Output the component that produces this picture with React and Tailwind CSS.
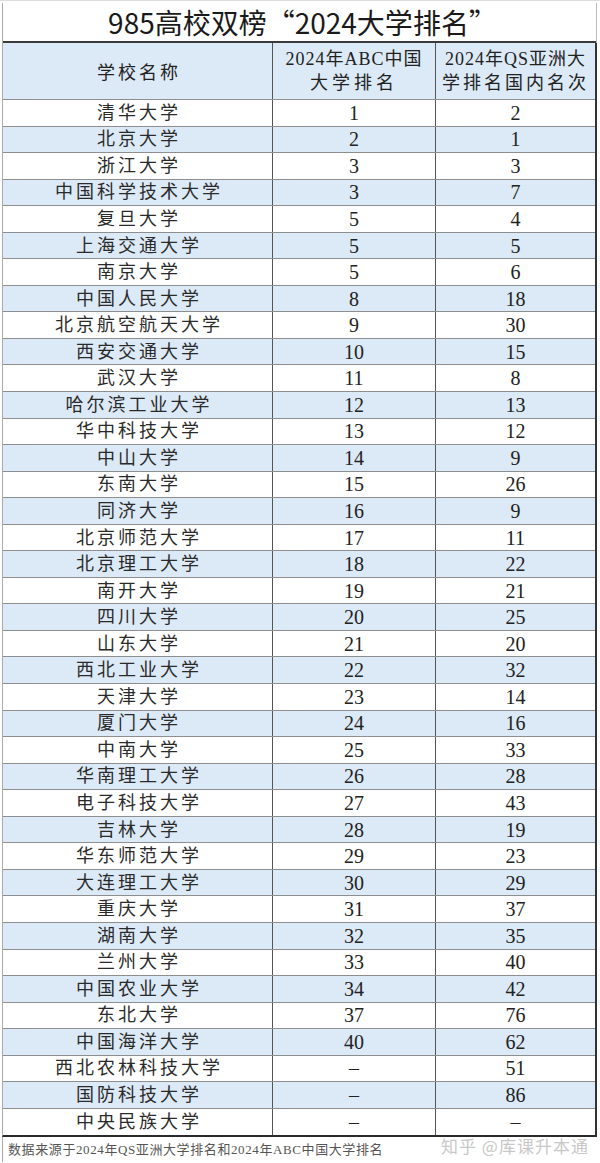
import React from 'react';

const rows = [
    ['清华大学', '1', '2'],
    ['北京大学', '2', '1'],
    ['浙江大学', '3', '3'],
    ['中国科学技术大学', '3', '7'],
    ['复旦大学', '5', '4'],
    ['上海交通大学', '5', '5'],
    ['南京大学', '5', '6'],
    ['中国人民大学', '8', '18'],
    ['北京航空航天大学', '9', '30'],
    ['西安交通大学', '10', '15'],
    ['武汉大学', '11', '8'],
    ['哈尔滨工业大学', '12', '13'],
    ['华中科技大学', '13', '12'],
    ['中山大学', '14', '9'],
    ['东南大学', '15', '26'],
    ['同济大学', '16', '9'],
    ['北京师范大学', '17', '11'],
    ['北京理工大学', '18', '22'],
    ['南开大学', '19', '21'],
    ['四川大学', '20', '25'],
    ['山东大学', '21', '20'],
    ['西北工业大学', '22', '32'],
    ['天津大学', '23', '14'],
    ['厦门大学', '24', '16'],
    ['中南大学', '25', '33'],
    ['华南理工大学', '26', '28'],
    ['电子科技大学', '27', '43'],
    ['吉林大学', '28', '19'],
    ['华东师范大学', '29', '23'],
    ['大连理工大学', '30', '29'],
    ['重庆大学', '31', '37'],
    ['湖南大学', '32', '35'],
    ['兰州大学', '33', '40'],
    ['中国农业大学', '34', '42'],
    ['东北大学', '37', '76'],
    ['中国海洋大学', '40', '62'],
    ['西北农林科技大学', '–', '51'],
    ['国防科技大学', '–', '86'],
    ['中央民族大学', '–', '–'],
];

const serif = "font-['Liberation_Serif','Noto_Sans_CJK_SC',serif]";

export default function App() {
    return (
        <div className={`relative w-[600px] h-[1163px] overflow-hidden bg-white text-[#222] ${serif}`}>
            <div className="h-[3px] border-t border-[#ddd]" />
            <div className="ml-[2px] w-[595px] border-l border-[#aaa] border-r border-r-[#bbb]">
                <div className="h-[40px] border-b-2 border-[#3a3a3a] flex items-center justify-center pl-[6px] font-['Noto_Sans_CJK_SC',sans-serif] text-[28px] leading-none text-[#1a1a1a]">
                    985高校双榜“2024大学排名”
                </div>
            </div>
            <div className="ml-[2px] w-[595px] border-l border-[#aaa] border-r-2 border-r-[#333] border-b-2 border-b-[#2a2a2a]">
                <div className="grid grid-cols-[270px_163px_1fr] h-[57px] bg-[#dce9f6] border-b border-[#8e8e8e] text-[18px] leading-[24px]">
                    <div className="flex items-center justify-center border-r border-[#555] tracking-[3px] pl-[3px] pt-[4px]">学校名称</div>
                    <div className="flex flex-col items-center justify-center border-r border-[#555] text-center tracking-[1px]">
                        <span>2024年ABC中国</span>
                        <span className="tracking-[4px]">大学排名</span>
                    </div>
                    <div className="flex flex-col items-center justify-center text-center tracking-[1px]">
                        <span>2024年QS亚洲大</span>
                        <span className="tracking-[3px]">学排名国内名次</span>
                    </div>
                </div>
                {rows.map((r, i) => (
                    <div key={i} className={`grid grid-cols-[270px_163px_1fr] h-[26.56px] ${i === rows.length - 1 ? '' : 'border-b border-[#8e8e8e]'} ${i % 2 === 1 ? 'bg-[#dce9f6]' : 'bg-white'}`}>
                        <div className="flex items-center justify-center border-r border-[#555] text-[18px] leading-none tracking-[3px] pl-[3px] text-[#2a2a2a]">{r[0]}</div>
                        <div className="flex items-center justify-center border-r border-[#555] text-[20px] leading-none">{r[1]}</div>
                        <div className="flex items-center justify-center text-[20px] leading-none">{r[2]}</div>
                    </div>
                ))}
            </div>
            <div className="ml-[2px] w-[595px] h-[25px] flex items-center border-l border-[#aaa] pl-[5px] text-[13px] tracking-[0.6px] text-[#555]">
                数据来源于2024年QS亚洲大学排名和2024年ABC中国大学排名
            </div>
            <div className="absolute left-[441px] top-[1137px] font-['Noto_Sans_CJK_SC',sans-serif] text-[17px] leading-none text-[#c8c8c8] tracking-[1px]">
                知乎 @库课升本通
            </div>
        </div>
    );
}
